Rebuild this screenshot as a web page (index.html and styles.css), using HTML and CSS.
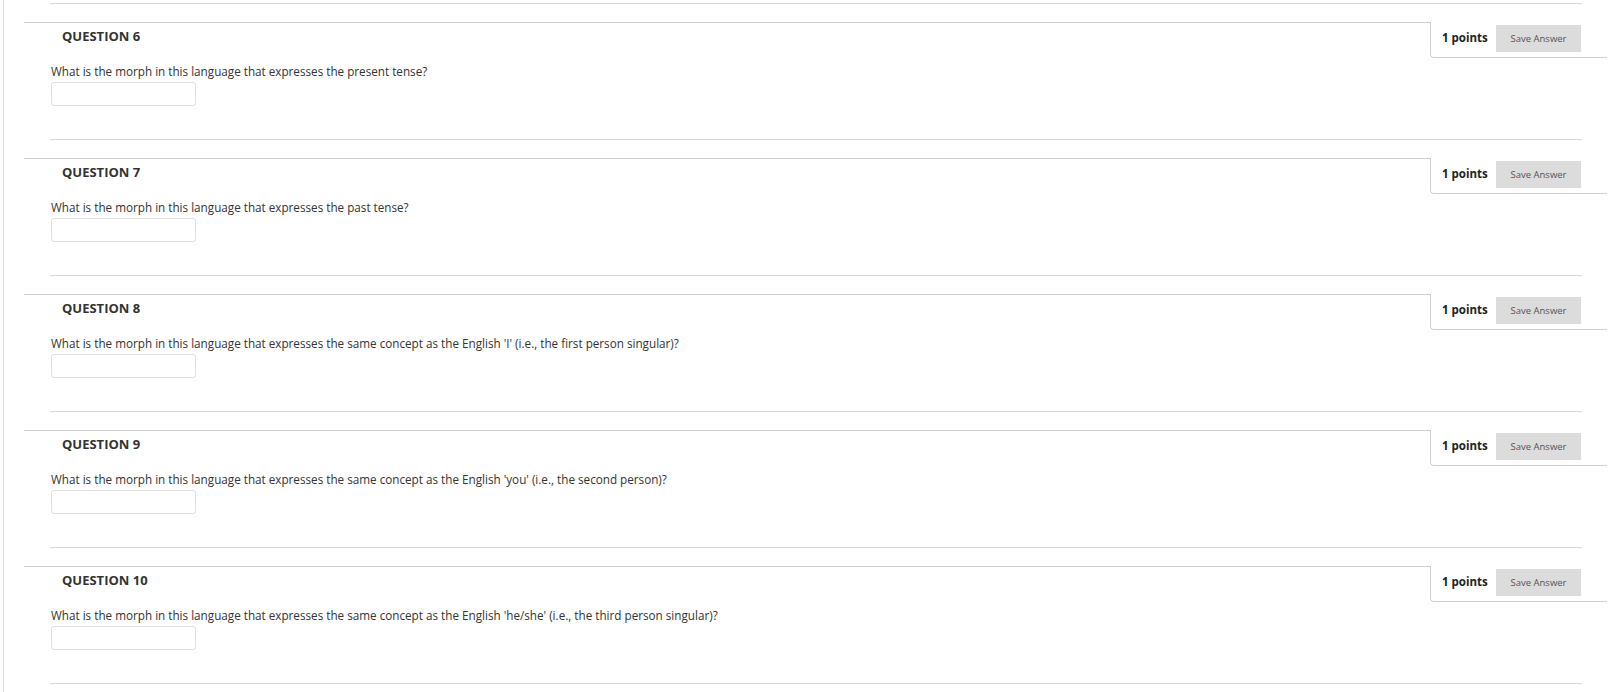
FILE: index.html
```html
<!DOCTYPE html>
<html lang="en">
<head>
  <meta charset="UTF-8">
  <title>Test</title>
  <link rel="stylesheet" href="styles.css">
</head>
<body>
  <div class="page">
    <div class="prev-tail"></div>

    <ul class="questions">
      <li class="question">
        <div class="step-title">
          <h3 class="step-name">QUESTION 6</h3>
          <div class="points">
            <span class="points-value">1 points</span>
            <button class="save-btn">Save Answer</button>
          </div>
        </div>
        <div class="step-body">
          <p class="q-text">What is the morph in this language that expresses the present tense?</p>
          <input type="text" class="answer">
        </div>
      </li>

      <li class="question">
        <div class="step-title">
          <h3 class="step-name">QUESTION 7</h3>
          <div class="points">
            <span class="points-value">1 points</span>
            <button class="save-btn">Save Answer</button>
          </div>
        </div>
        <div class="step-body">
          <p class="q-text">What is the morph in this language that expresses the past tense?</p>
          <input type="text" class="answer">
        </div>
      </li>

      <li class="question">
        <div class="step-title">
          <h3 class="step-name">QUESTION 8</h3>
          <div class="points">
            <span class="points-value">1 points</span>
            <button class="save-btn">Save Answer</button>
          </div>
        </div>
        <div class="step-body">
          <p class="q-text">What is the morph in this language that expresses the same concept as the English 'I' (i.e., the first person singular)?</p>
          <input type="text" class="answer">
        </div>
      </li>

      <li class="question">
        <div class="step-title">
          <h3 class="step-name">QUESTION 9</h3>
          <div class="points">
            <span class="points-value">1 points</span>
            <button class="save-btn">Save Answer</button>
          </div>
        </div>
        <div class="step-body">
          <p class="q-text">What is the morph in this language that expresses the same concept as the English 'you' (i.e., the second person)?</p>
          <input type="text" class="answer">
        </div>
      </li>

      <li class="question">
        <div class="step-title">
          <h3 class="step-name">QUESTION 10</h3>
          <div class="points">
            <span class="points-value">1 points</span>
            <button class="save-btn">Save Answer</button>
          </div>
        </div>
        <div class="step-body">
          <p class="q-text">What is the morph in this language that expresses the same concept as the English 'he/she' (i.e., the third person singular)?</p>
          <input type="text" class="answer">
        </div>
      </li>
    </ul>
  </div>
</body>
</html>
```

FILE: styles.css
```css
html, body { margin: 0; padding: 0; background: #fff; }
body {
  font-family: "Open Sans", "Liberation Sans", sans-serif;
  color: #333;
}
.page {
  margin-left: 3px; border-left: 1px solid #dcdcdc;
  height: 692px; overflow: hidden; box-sizing: border-box;
  padding-left: 20px; padding-right: 14px;
}
.prev-tail {
  height: 3px; border-bottom: 1px solid #d4d4d4;
  margin: 0 25px 0 26px;
}
.questions { list-style: none; margin: 0; padding: 0; }
.question { margin-top: 18px; }

.step-title { display: flex; align-items: flex-start; }
.step-name {
  flex: 1; margin: 0; border-top: 1px solid #d0d0d0;
  padding: 4px 0 0 38px; height: 31px;
  font-size: 13px; font-weight: 700; color: #333;
}
.points {
  width: 176px; height: 32px; border-left: 1px solid #d0d0d0; border-bottom: 1px solid #d0d0d0;
  border-bottom-left-radius: 4px;
  display: flex; align-items: flex-start; padding-top: 3px;
}
.points-value {
  font-size: 11.5px; font-weight: 700; color: #222;
  margin: 5px 0 0 11px; width: 54px;
}
.save-btn {
  width: 85px; height: 27px; border: none; background-color: #dcdcdc;
  font-family: inherit; font-size: 9.5px; color: #555; padding: 0; cursor: pointer;
}

.step-body {
  margin: 0 25px 0 26px; padding: 4px 0 33px 1px;
  border-bottom: 1px solid #d4d4d4;
}
.q-text { margin: 0; font-size: 11.7px; line-height: 18px; color: #333; }
.answer {
  display: block; margin-top: 2px; width: 145px; height: 24px; box-sizing: border-box;
  border: 1px solid #e0e0e0; border-radius: 3px; padding: 0.2rem;
}
```
